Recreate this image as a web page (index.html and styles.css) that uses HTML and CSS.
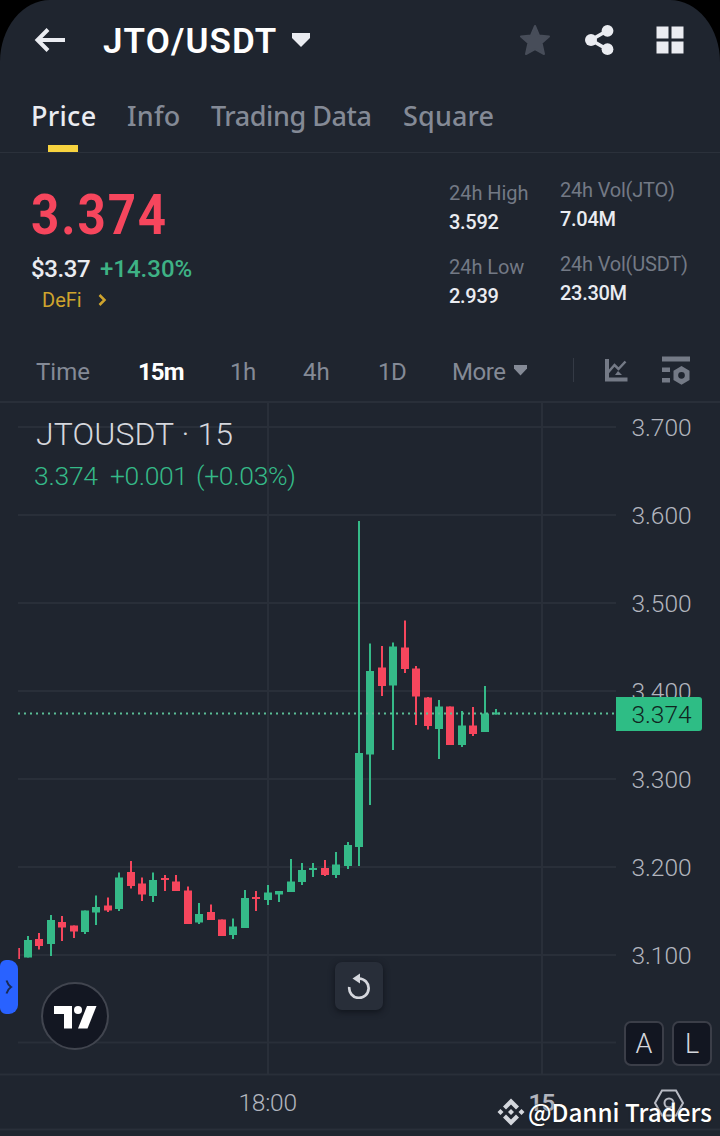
FILE: index.html
```html
<!DOCTYPE html>
<html lang="en">
<head>
<meta charset="utf-8">
<title>JTO/USDT</title>
<link rel="stylesheet" href="styles.css">
</head>
<body>
<main class="app">
  <header class="header">
    <svg class="back" width="32" height="26" viewBox="0 0 32 26"><path d="M14 2.500 3.500 13 14 23.500M4 13H31" fill="none" stroke="#eaecf1" stroke-width="4"/></svg>
    <h1 class="pair">JTO/USDT</h1>
    <svg class="caret" width="20" height="16" viewBox="0 0 20 16"><path d="M1 1H19V6L10 15 1 6Z" fill="#eaecf1"/></svg>
    <div class="actions">
      <svg width="32" height="32" viewBox="0 0 32 32"><path d="M16 2 20 11.500 30 12.400 22.600 19 25 30 16 25.200 7 30 9.400 19 2 12.400 12 11.500Z" fill="#474d59" stroke="#474d59" stroke-width="2" stroke-linejoin="round"/></svg>
      <svg width="32" height="32" viewBox="0 0 32 32"><path d="M23.500 6.500 7 16 23.500 25.500" fill="none" stroke="#eaecf1" stroke-width="3.600"/><g fill="#eaecf1"><circle cx="23.500" cy="6.800" r="5.900"/><circle cx="7" cy="16" r="6"/><circle cx="23.500" cy="25.200" r="5.900"/></g></svg>
      <svg width="28" height="28" viewBox="0 0 28 28"><path d="M.5.500h12v12H.5zM15.500.500h12v12h-12zM.5 15.500h12v12H.5zM15.500 15.500h12v12h-12z" fill="#eaecf1"/></svg>
    </div>
  </header>

  <nav class="tabs">
    <span class="tab active">Price</span>
    <span class="tab info">Info</span>
    <span class="tab trading">Trading Data</span>
    <span class="tab square">Square</span>
  </nav>

  <section class="summary">
    <div class="quote">
      <div class="last">3.374</div>
      <div class="change"><span class="fiat">$3.37</span><span class="pct">+14.30%</span></div>
      <div class="tag"><span>DeFi</span><svg width="9" height="12" viewBox="0 0 9 12"><path d="M1.500 1 6.500 6 1.500 11" fill="none" stroke="#cfa42d" stroke-width="2.500"/></svg></div>
    </div>
    <dl class="stats range">
      <dt>24h High</dt><dd>3.592</dd>
      <dt>24h Low</dt><dd>2.939</dd>
    </dl>
    <dl class="stats volume">
      <dt>24h Vol(JTO)</dt><dd>7.04M</dd>
      <dt>24h Vol(USDT)</dt><dd>23.30M</dd>
    </dl>
  </section>

  <nav class="intervals">
    <span class="time">Time</span>
    <span class="m15">15m</span>
    <span class="h1">1h</span>
    <span class="h4">4h</span>
    <span class="d1">1D</span>
    <span class="more">More</span>
    <svg class="more-caret" width="13" height="11" viewBox="0 0 13 11"><path d="M0 0H13V3.500L6.500 10.500 0 3.500Z" fill="#848a96"/></svg>
    <i class="divider"></i>
    <svg class="line-icon" width="23" height="23" viewBox="0 0 23 23"><path d="M2 0V20.500H22.500" fill="none" stroke="#747a86" stroke-width="4"/><path d="M3 13.500 9.500 6 13.500 10 20.500 2.500" fill="none" stroke="#747a86" stroke-width="2.500"/><path d="M10 16 13 12 17 16Z" fill="#747a86"/></svg>
    <svg class="settings-icon" width="28" height="29" viewBox="0 0 28 29"><path d="M0 .500H28V5.500H0zM0 11.500H8V16H0zM0 22H8V26.500H0z" fill="#747a86"/><path fill-rule="evenodd" d="M19.500 10 27.500 14.700V24L19.500 28.700 11.500 24V14.700ZM19.500 16A3.300 3.300 0 1 0 19.500 22.700 3.300 3.300 0 1 0 19.500 16Z" fill="#747a86"/></svg>
  </nav>

  <section class="chart">
    <svg class="plot" width="720" height="735" viewBox="0 401 720 735">
      <g class="grid">
        <path d="M0 402H720M0 1074.500H720M0 1129.500H720M18 427H616M18 515H616M18 603H616M18 691H616M18 779H616M18 867H616M18 955H616M18 1042.500H616M268 402V1074M542 402V1074"/>
      </g>
      <g id="candles"></g>
      <path class="last-line" d="M18 713.500H616"/>
      <g class="axis">
        <text x="631.500" y="436" textLength="60">3.700</text>
        <text x="631.500" y="524" textLength="60">3.600</text>
        <text x="631.500" y="612" textLength="60">3.500</text>
        <text x="631.500" y="700" textLength="60">3.400</text>
        <text x="631.500" y="788" textLength="60">3.300</text>
        <text x="631.500" y="876" textLength="60">3.200</text>
        <text x="631.500" y="964" textLength="60">3.100</text>
        <text x="238.500" y="1111" textLength="58.500">18:00</text>
        <text class="day" x="528.500" y="1111" textLength="27">15</text>
      </g>
      <path d="M616 697H699Q702 697 702 700V728Q702 731 699 731H616Z" fill="#2ebd85"/>
      <text class="last-label" x="631.500" y="723" textLength="60">3.374</text>
      <text class="symbol" x="36" y="445" textLength="197">JTOUSDT · 15</text>
      <g class="delta">
        <text x="34" y="485" textLength="64">3.374</text>
        <text x="110" y="485" textLength="78">+0.001</text>
        <text x="196" y="485" textLength="100">(+0.03%)</text>
      </g>
      <g fill="none" stroke="#b8bbc4" stroke-width="2"><path d="M662 1090.500H676L683 1103 676 1115.500H662L655 1103Z"/><circle cx="669" cy="1103" r="4.500"/></g>
    </svg>
    <button class="drawer"><svg width="8" height="16" viewBox="0 0 8 16"><path d="M1.500 1.500Q3 6 6 8 3 10 1.500 14.500" fill="none" stroke="#192a55" stroke-width="2"/></svg></button>
    <svg class="tv" width="68" height="68" viewBox="0 0 68 68"><circle cx="34" cy="34" r="33" fill="#131722" stroke="#41454f" stroke-width="2"/><path d="M13 24H31V46.500H23V32H13Z" fill="#fff"/><circle cx="37" cy="28" r="4" fill="#fff"/><path d="M46 24H55.500L46.500 46.500H37Z" fill="#fff"/></svg>
    <button class="reset"><svg width="24" height="26" viewBox="0 0 24 26"><path d="M2.300 14A9.700 9.700 0 1 0 12 5.500H11" fill="none" stroke="#d5d7dd" stroke-width="2.700"/><path d="M5.500 5.500 13 .5V10.500Z" fill="#d5d7dd"/></svg></button>
    <div class="scales"><button>A</button><button>L</button></div>
    <div class="watermark"><svg width="28" height="28" viewBox="0 0 28 28"><g fill="#d4d7dd"><path d="M14 .5 22 8.500 19 11.500 14 6.500 9 11.500 6 8.500ZM14 27.500 6 19.500 9 16.500 14 21.500 19 16.500 22 19.500ZM14 11 17 14 14 17 11 14ZM3.500 11 6.500 14 3.500 17 .5 14ZM24.500 11 27.500 14 24.500 17 21.500 14Z"/></g></svg><span>@Danni Traders</span></div>
  </section>
</main>
<script src="chart.js"></script>
</body>
</html>
```
FILE: chart.js
```js
// Each candle: centre x, direction, body top, body bottom, high, low
const candles = [
  [28,'u',940,957.5,936,957.5],[39,'d',939,946,933,949.5],[51,'u',920,944,915,956],
  [62,'d',922,927.5,916,941],[74,'d',925.5,931.5,925.5,938],[85,'u',910.5,932,910.5,934],
  [96,'u',907,912.5,895.5,925],[108,'d',905.5,910.5,897.5,912],[119,'u',877.5,909,872.5,911],
  [131,'d',872,886,861,888.5],[142,'d',883.5,894.5,877.5,901],[153,'u',880,896,872.5,902],
  [165,'d',878,880,875,891],[176,'d',881.5,891,875,891],[188,'d',890.5,924,886.5,924],
  [199,'u',914,922.5,903,924],[211,'d',912,920,904.5,920],[222,'d',919.5,936,919.5,936],
  [233,'u',926.5,935,918.5,939],[245,'u',898,928,890,928],[256,'d',897,899,891,911],
  [268,'u',892.5,900,885,905],[279,'u',891,894.5,891,902],[291,'u',881.5,892,859,892],
  [302,'u',870,882,863,885],[313,'u',868,870,863,877],[325,'d',868,875,860,876],
  [336,'u',864.5,875,852,878],[348,'u',845,866,842,869],[359,'u',753,847,521,866],
  [370,'u',671,754.5,643.5,805],[382,'d',667.5,686,646,696],[393,'u',646.5,685.5,642.5,750],
  [405,'d',647.5,669,620.5,673],[416,'d',668.5,696.5,666,725],[428,'d',697.5,726,697,729.5],
  [439,'u',706.5,729,700,759],[450,'d',706.5,745,706.5,745],[462,'u',725.5,745,711,747],
  [473,'d',725.5,734,707,736],[485,'u',713.5,732,686,732],[496,'u',712.5,714.5,709,714.5]
];
const layer = document.getElementById('candles');
function rect(x, y, width, height, cls) {
  const r = document.createElementNS('http://www.w3.org/2000/svg', 'rect');
  Object.entries({ x, y, width, height, class: cls }).forEach(([k, v]) => r.setAttribute(k, v));
  layer.appendChild(r);
}
rect(18.3, 948, 1.7, 11, 'd');
for (const [x, dir, top, bottom, high, low] of candles) {
  rect(x - 1, high, 2, low - high, dir);
  rect(x - 4, top, 8, bottom - top, dir);
}
```
FILE: styles.css
```css
body { margin: 0; background: #000; font-family: Roboto, "Noto Sans", sans-serif; color: #eaecf1; }
.app { width: 720px; height: 1136px; overflow: hidden; background: #1f252f; border-radius: 50px 50px 0 0 / 62px 62px 0 0; }
svg { display: block; flex: none; }
button { padding: 0; border: 0; font: inherit; color: inherit; }
.header { display: flex; align-items: center; height: 80px; padding: 0 34px; }
.pair { margin: 4px 0 0 37px; width: 174px; font: 600 35px/40px Roboto, sans-serif; white-space: nowrap; letter-spacing: 1.1px; color: #fff; }
.caret { margin-left: 14px; }
.actions { display: flex; align-items: center; gap: 33px; margin-left: auto; margin-right: 2px; }
.actions svg:last-child { margin-left: 7px; }
.tabs { display: flex; height: 72px; padding-left: 31px; border-bottom: 1px solid #2b313b; font: 500 27px/32px "Noto Sans", sans-serif; color: #848a96; }
.tab { flex: none; height: 72px; padding-top: 20px; box-sizing: border-box; white-space: nowrap; }
.active { width: 65px; margin-right: 31px; color: #eaecf1; letter-spacing: .3px; }
.active::after { content: ""; display: block; width: 30px; height: 7px; margin: 13px 0 0 17px; background: #f7d33f; }
.info { width: 54px; margin-right: 30px; letter-spacing: .2px; }
.trading { width: 161px; margin-right: 31px; letter-spacing: -.45px; }
.square { letter-spacing: .15px; }
.summary { display: flex; height: 188px; padding-left: 31px; }
.quote { width: 418px; padding-top: 32px; }
.last { font: 700 56px/60px Roboto, sans-serif; color: #f6465d; letter-spacing: 2.2px; transform: scaleX(.88); transform-origin: 0 50%; }
.change { display: flex; margin-top: 10px; font-size: 24px; line-height: 28px; font-weight: 500; }
.fiat { width: 69px; letter-spacing: -.4px; }
.pct { color: #3eb285; }
.tag { display: flex; align-items: center; gap: 16px; margin: 5px 0 0 11px; font-size: 20px; line-height: 24px; color: #cfa42d; }
.stats { margin: 0; font-size: 20px; }
.range { width: 111px; padding-top: 27px; }
.volume { padding-top: 24px; }
.stats dt { height: 27px; line-height: 27px; white-space: nowrap; color: #737985; letter-spacing: -.05px; }
.volume dt { letter-spacing: -.2px; }
.stats dd { height: 24px; margin: 3px 0 20px; line-height: 24px; font-weight: 500; letter-spacing: -.3px; }
.intervals { display: flex; align-items: center; height: 60px; padding-left: 36px; font-size: 24px; color: #848a96; }
.intervals span { flex: none; padding-top: 2px; white-space: nowrap; }
.time { width: 102px; }
.m15 { width: 92px; font-weight: 700; color: #fff; letter-spacing: -.9px; }
.h1 { width: 73px; letter-spacing: -.5px; }
.h4 { width: 75px; }
.d1 { width: 74px; letter-spacing: -.5px; }
.more { width: 54px; letter-spacing: -.4px; }
.more-caret { margin: -2px 0 0 8px; }
.divider { width: 1px; height: 24px; margin: -2px 0 0 46px; background: #343a45; }
.line-icon { margin: -2px 0 0 31px; }
.settings-icon { margin: -2px 0 0 34px; }
.chart { position: relative; height: 735px; }
.grid path { fill: none; stroke: #292f39; stroke-width: 2; }
.u { fill: #35ba88; }
.d { fill: #f6465d; }
.last-line { fill: none; stroke: #5bbd96; stroke-width: 2; stroke-dasharray: 2 4; }
.plot text { font-family: Roboto, sans-serif; font-weight: 350; }
.axis text { font-size: 24.5px; fill: #b2b5be; }
.plot .day { font-weight: 600; }
.plot .last-label { font-size: 24.5px; fill: #10251f; }
.plot .symbol { font-size: 32px; font-weight: 300; fill: #d5d7dd; }
.delta text { font-size: 26.5px; fill: #35ba88; }
.drawer { position: absolute; left: 0; top: 559px; width: 18px; height: 54px; border-radius: 6px 9px 9px 6px; background: #2962ff; display: grid; place-items: center; }
.tv { position: absolute; left: 41px; top: 581px; }
.reset { position: absolute; left: 335px; top: 561px; width: 48px; height: 48px; border-radius: 7px; background: #282e39; box-shadow: 0 2px 6px #10141c; display: grid; place-items: center; }
.scales { position: absolute; left: 624px; top: 620px; display: flex; gap: 8px; }
.scales button { box-sizing: border-box; width: 40px; height: 45px; border: 2px solid #3b3e48; border-radius: 7px; background: #121621; font-size: 27px; font-weight: 300; color: #d5d7dd; }
.watermark { position: absolute; left: 497px; top: 693px; display: flex; align-items: center; gap: 3px; height: 36px; font: 500 24.200px/36px "Noto Sans CJK SC", "Noto Sans", sans-serif; color: #fff; white-space: nowrap; text-shadow: 0 0 2px #222; }
```
